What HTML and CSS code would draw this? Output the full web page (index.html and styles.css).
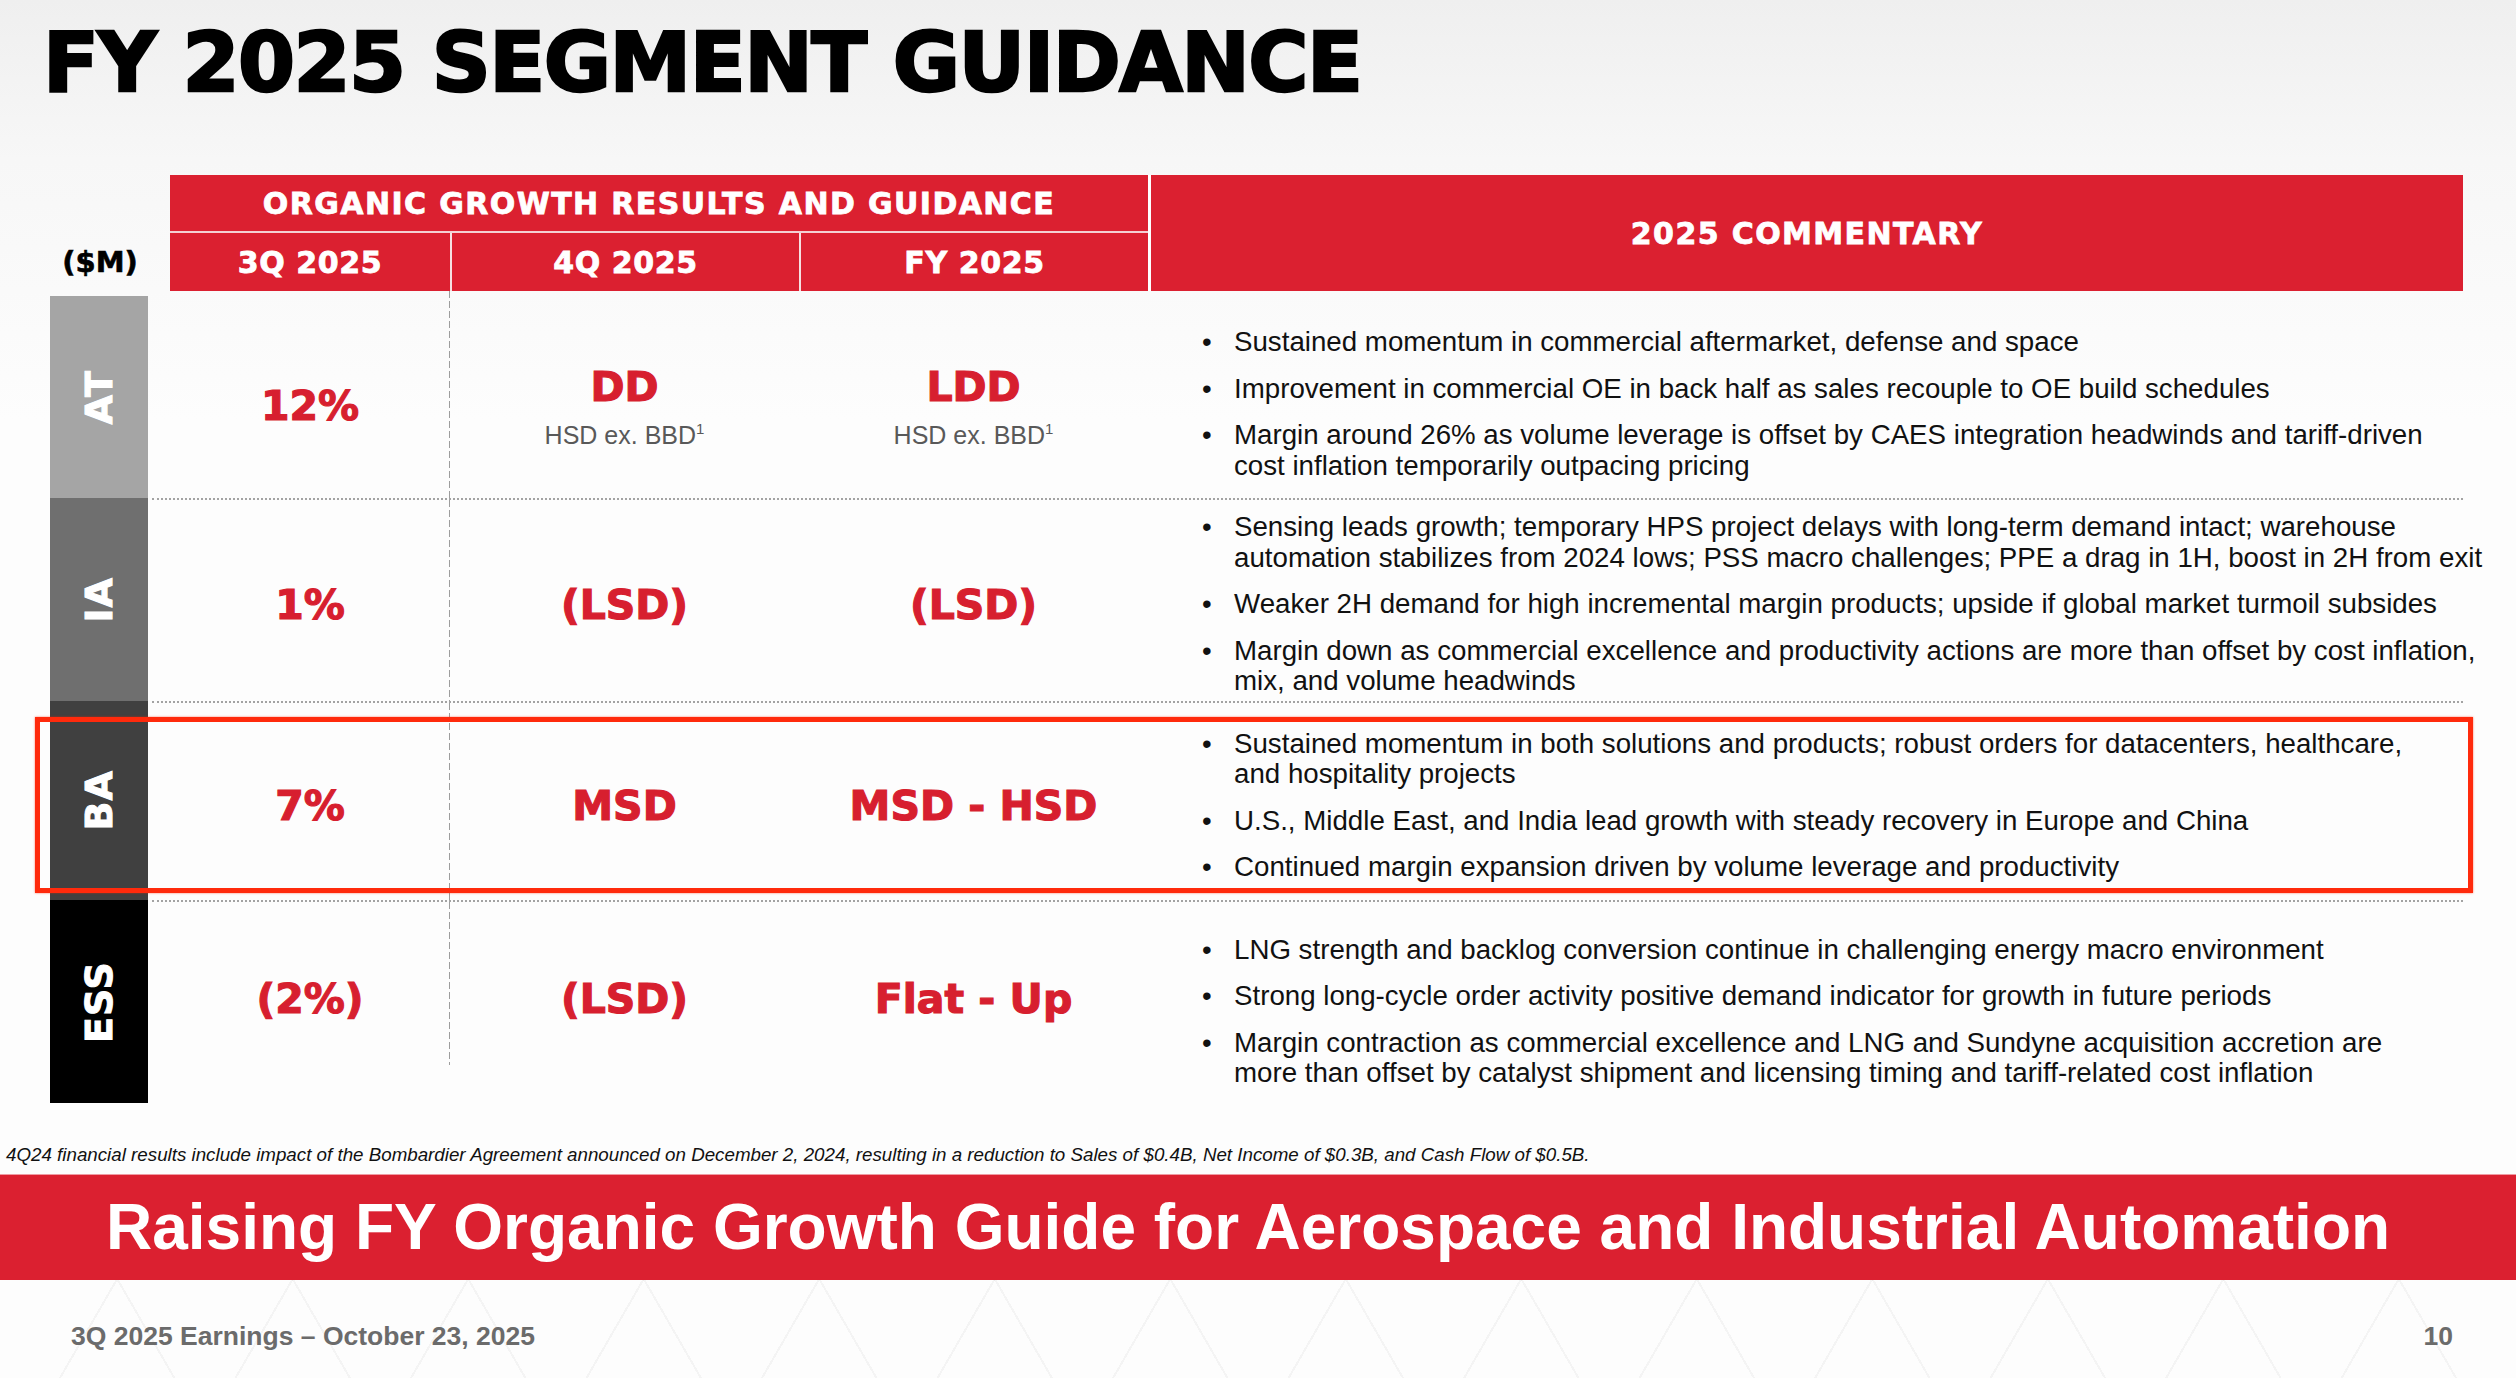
FILE: index.html
```html
<!DOCTYPE html>
<html lang="en">
<head>
    <meta charset="UTF-8">
    <meta name="viewport" content="width=device-width, initial-scale=1.0">
    <title>FY 2025 Segment Guidance</title>

    <link rel="stylesheet" href="styles.css">

</head>
<body>
<div class="slide">

    <h1 class="title">FY 2025 SEGMENT GUIDANCE</h1>

    <div class="guide">

        <div class="guide-head">
            <div class="unit">($M)</div>
            <div class="hd hd-group">ORGANIC GROWTH RESULTS AND GUIDANCE</div>
            <div class="hd hd-comm">2025 COMMENTARY</div>
            <div class="hd hd-q hd-first">3Q 2025</div>
            <div class="hd hd-q">4Q 2025</div>
            <div class="hd hd-q">FY 2025</div>
        </div>

        <!-- AT -->
        <div class="seg seg-at">
            <div class="seg-bar"><span>AT</span></div>
            <div class="seg-body">
                <div class="cell"><span class="val">12%</span></div>
                <div class="cell c-mid"><span class="val">DD</span><span class="sub">HSD ex. BBD<sup>1</sup></span></div>
                <div class="cell"><span class="val">LDD</span><span class="sub">HSD ex. BBD<sup>1</sup></span></div>
                <div class="comm">
                    <ul>
                        <li>Sustained momentum in commercial aftermarket, defense and space</li>
                        <li>Improvement in commercial OE in back half as sales recouple to OE build schedules</li>
                        <li>Margin around 26% as volume leverage is offset by CAES integration headwinds and tariff-driven<br>cost inflation temporarily outpacing pricing</li>
                    </ul>
                </div>
            </div>
        </div>

        <!-- IA -->
        <div class="seg seg-ia">
            <div class="seg-bar"><span>IA</span></div>
            <div class="seg-body dotted">
                <div class="cell"><span class="val">1%</span></div>
                <div class="cell c-mid"><span class="val">(LSD)</span></div>
                <div class="cell"><span class="val">(LSD)</span></div>
                <div class="comm">
                    <ul>
                        <li>Sensing leads growth; temporary HPS project delays with long-term demand intact; warehouse<br>automation stabilizes from 2024 lows; PSS macro challenges; PPE a drag in 1H, boost in 2H from exit</li>
                        <li>Weaker 2H demand for high incremental margin products; upside if global market turmoil subsides</li>
                        <li>Margin down as commercial excellence and productivity actions are more than offset by cost inflation,<br>mix, and volume headwinds</li>
                    </ul>
                </div>
            </div>
        </div>

        <!-- BA -->
        <div class="seg seg-ba">
            <div class="seg-bar"><span>BA</span></div>
            <div class="seg-body dotted">
                <div class="cell"><span class="val">7%</span></div>
                <div class="cell c-mid"><span class="val">MSD</span></div>
                <div class="cell"><span class="val">MSD - HSD</span></div>
                <div class="comm">
                    <ul>
                        <li>Sustained momentum in both solutions and products; robust orders for datacenters, healthcare,<br>and hospitality projects</li>
                        <li>U.S., Middle East, and India lead growth with steady recovery in Europe and China</li>
                        <li>Continued margin expansion driven by volume leverage and productivity</li>
                    </ul>
                </div>
            </div>
        </div>

        <!-- ESS -->
        <div class="seg seg-ess">
            <div class="seg-bar"><span>ESS</span></div>
            <div class="seg-body dotted">
                <div class="cell"><span class="val">(2%)</span></div>
                <div class="cell c-mid"><span class="val">(LSD)</span></div>
                <div class="cell"><span class="val">Flat - Up</span></div>
                <div class="comm">
                    <ul>
                        <li>LNG strength and backlog conversion continue in challenging energy macro environment</li>
                        <li>Strong long-cycle order activity positive demand indicator for growth in future periods</li>
                        <li>Margin contraction as commercial excellence and LNG and Sundyne acquisition accretion are<br>more than offset by catalyst shipment and licensing timing and tariff-related cost inflation</li>
                    </ul>
                </div>
            </div>
        </div>

        <!-- hand drawn highlight round BA -->
        <div class="highlight"></div>
    </div>

    <p class="note">4Q24 financial results include impact of the Bombardier Agreement announced on December 2, 2024, resulting in a reduction to Sales of $0.4B, Net Income of $0.3B, and Cash Flow of $0.5B.</p>

    <div class="banner">Raising FY Organic Growth Guide for Aerospace and Industrial Automation</div>

    <div class="footer">
        <span>3Q 2025 Earnings &ndash; October 23, 2025</span>
        <span>10</span>
    </div>

</div>
</body>
</html>
```

FILE: styles.css
```css
body, html {
    margin: 0;
    padding: 0;
    font-family: "Liberation Sans", Arial, sans-serif;
}

.slide {
    position: relative;
    width: 2516px;
    height: 1378px;
    overflow: hidden;
    display: flex;
    flex-direction: column;
    background: linear-gradient(to bottom, #efefef 0, #f7f7f7 160px, #fdfdfd 420px, #fdfdfd 100%);
}

.title {
    margin: 22px 0 0 0;
    padding-left: 43px;
    font-family: "DejaVu Sans", sans-serif;
    font-weight: bold;
    font-size: 82px;
    line-height: 82px;
    letter-spacing: -1.5px;
    color: #000;
    -webkit-text-stroke: 2.5px #000;
}

/* table block */
.guide {
    position: relative;
    margin: 71px 0 0 50px;
    width: 2413px;
}

.guide-head {
    display: grid;
    grid-template-columns: 120px 280px 349px 349px 1315px;
    grid-template-rows: 58px 58px;
}

.hd {
    background-color: #db2030;
    color: #fff;
    font-family: "DejaVu Sans", sans-serif;
    font-weight: bold;
    font-size: 30px;
    letter-spacing: 1.4px;
    -webkit-text-stroke: 0.8px #fff;
    display: flex;
    align-items: center;
    justify-content: center;
}

.hd-group {
    grid-column: 2 / 5;
    grid-row: 1;
    border-bottom: 2px solid #f4d0d3;
}

.hd-comm {
    grid-column: 5;
    grid-row: 1 / 3;
    border-left: 3px solid #fff;
}

.hd-q {
    grid-row: 2;
    border-left: 2px solid #f6e0e2;
    letter-spacing: 0.6px;
}

.hd-first {
    border-left: none;
}

.unit {
    grid-column: 1;
    grid-row: 2;
    display: flex;
    align-items: center;
    justify-content: center;
    padding-right: 20px;
    font-family: "DejaVu Sans", sans-serif;
    font-weight: bold;
    font-size: 29px;
    color: #000;
    -webkit-text-stroke: 0.6px #000;
}

/* segment rows */
.seg {
    display: flex;
}

.seg-at { margin-top: 5px; height: 202px; }
.seg-ia { height: 203px; }
.seg-ba { height: 199px; }
.seg-ess { height: 203px; }

.seg-bar {
    width: 98px;
    display: flex;
    align-items: center;
    justify-content: center;
}

.seg-at .seg-bar { background-color: #a5a5a5; }
.seg-ia .seg-bar { background-color: #6f6f6f; }
.seg-ba .seg-bar { background-color: #404040; }
.seg-ess .seg-bar { background-color: #000; }

.seg-bar span {
    writing-mode: vertical-rl;
    transform: rotate(180deg);
    color: #fff;
    font-family: "DejaVu Sans", sans-serif;
    font-weight: bold;
    font-size: 38px;
    letter-spacing: 1px;
    -webkit-text-stroke: 1px #fff;
}

.seg-body {
    margin-left: 4px;
    padding-left: 18px;
    flex: 1;
    display: grid;
    grid-template-columns: 280px 349px 349px 1315px;
}

.dotted {
    border-top: 2px dotted #a3a3a3;
}

.cell {
    display: flex;
    flex-direction: column;
    align-items: center;
    justify-content: center;
    padding-top: 8px;
}

.seg-at .cell {
    padding-top: 18px;
}

.seg-ess .cell {
    padding-top: 0;
    padding-bottom: 8px;
}

.c-mid {
    position: relative;
}

/* dashed divider between 3Q and 4Q */
.c-mid::before {
    content: "";
    position: absolute;
    left: -1px;
    top: 0;
    bottom: 0;
    width: 1px;
    background: repeating-linear-gradient(to bottom, #9d9d9d 0, #9d9d9d 7px, transparent 7px, transparent 10px);
}

.seg-at .c-mid::before {
    top: -5px;
}

.seg-ess .c-mid::before {
    bottom: 38px;
}

.val {
    font-family: "DejaVu Sans", sans-serif;
    font-weight: bold;
    font-size: 41px;
    line-height: 46px;
    color: #d71f2f;
    -webkit-text-stroke: 1.2px #d71f2f;
}

.sub {
    margin-top: 11px;
    font-size: 25px;
    line-height: 28px;
    color: #595959;
}

.sub sup {
    font-size: 15px;
    vertical-align: 10px;
    line-height: 0;
}

.comm {
    display: flex;
    align-items: center;
    padding-top: 8px;
}

.seg-at .comm {
    padding-top: 14px;
}

.seg-ess .comm {
    padding-top: 18px;
}

.comm ul {
    margin: 0;
    padding: 0 0 0 54px;
    list-style: none;
    white-space: nowrap;
}

.comm li {
    font-size: 27.7px;
    line-height: 30.5px;
    color: #111;
    padding-left: 32px;
    text-indent: -32px;
}

.comm li + li {
    margin-top: 16px;
}

.comm li::before {
    content: "\2022";
    display: inline-block;
    width: 32px;
    text-indent: 0;
    vertical-align: top;
}

.highlight {
    position: absolute;
    left: -15px;
    top: 542px;
    width: 2428px;
    height: 166px;
    border: 5px solid #ff2a0c;
    box-shadow: 0 0 2px rgba(255, 40, 0, 0.6);
}

/* bottom */
.note {
    margin: 41px 0 0 0;
    padding-left: 6px;
    font-size: 18.75px;
    line-height: 22px;
    font-style: italic;
    color: #111;
}

.banner {
    margin-top: 8px;
    height: 105px;
    line-height: 105px;
    padding-right: 20px;
    background-color: #db2030;
    color: #fff;
    font-weight: bold;
    font-size: 64px;
    text-align: center;
    border-top: 1px solid #ef9aa2;
}

.footer {
    flex: 1;
    display: flex;
    justify-content: space-between;
    padding: 41px 63px 0 71px;
    font-size: 26.5px;
    line-height: 30px;
    font-weight: bold;
    color: #6b6b6b;
    background:
        repeating-linear-gradient(60deg, transparent 0, transparent 150px, rgba(0, 0, 0, 0.035) 150px, rgba(0, 0, 0, 0.035) 152px),
        repeating-linear-gradient(-60deg, transparent 0, transparent 150px, rgba(0, 0, 0, 0.035) 150px, rgba(0, 0, 0, 0.035) 152px);
}
```
